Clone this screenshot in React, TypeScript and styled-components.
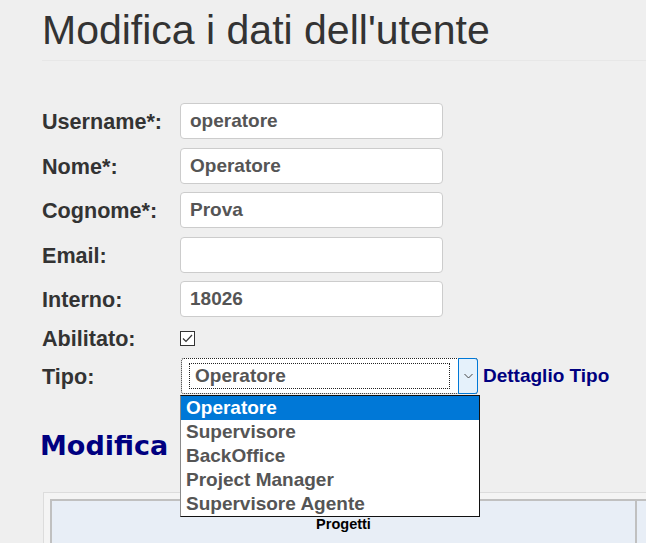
import styled, { createGlobalStyle } from 'styled-components';

const GlobalStyle = createGlobalStyle`
  html, body {
    margin: 0;
    padding: 0;
    background-color: #efefef;
    overflow: hidden;
  }
`;

const Page = styled.div`
  padding-left: 42px;
  font-family: "Liberation Sans", Arial, sans-serif;
  color: #333;
  width: 646px;
  height: 543px;
  box-sizing: border-box;
  overflow: hidden;
`;

const Title = styled.h1`
  margin: 0;
  padding: 8px 0 7px;
  font-size: 41px;
  font-weight: 400;
  line-height: 45px;
  color: #333;
  border-bottom: 1px solid #e7e7e7;
`;

const Form = styled.div`
  margin-top: 42px;
  display: flex;
  flex-direction: column;
  gap: 8.5px;
`;

const Row = styled.div<{ $height?: number }>`
  display: flex;
  align-items: center;
  height: ${(p) => p.$height ?? 36}px;
`;

const Label = styled.label`
  width: 138px;
  flex-shrink: 0;
  font-size: 21.6px;
  font-weight: 700;
  color: #333;
  padding-top: 2px;
`;

const TextInput = styled.div`
  width: 263px;
  height: 36px;
  box-sizing: border-box;
  background: #fff;
  border: 1px solid #ccc;
  border-radius: 4px;
  padding: 0 9px;
  display: flex;
  align-items: center;
  font-size: 19px;
  font-weight: 700;
  color: #555;
`;

const CheckBox = styled.span`
  width: 15px;
  height: 15px;
  box-sizing: border-box;
  border: 1px solid #333;
  background: #fff;
  display: flex;
  align-items: center;
  justify-content: center;
  margin-top: 2px;
`;

const SelectWrap = styled.div`
  position: relative;
  margin-left: 1px;
`;

const SelectBox = styled.div`
  width: 297px;
  height: 36px;
  box-sizing: border-box;
  display: flex;
  background: #fff;
  border: 1px dotted #222;
  border-radius: 3px;
`;

const SelectValue = styled.div`
  flex: 1;
  margin: 4px 8px 4px 7px;
  border: 1px dotted #222;
  display: flex;
  align-items: center;
  padding-left: 5px;
  font-size: 19px;
  font-weight: 700;
  color: #555;
`;

const SelectArrow = styled.div`
  width: 20px;
  box-sizing: border-box;
  background: #e5f1fb;
  border: 1px solid #0078d7;
  border-radius: 0 3px 3px 0;
  margin: -1px -1px -1px 0;
  display: flex;
  align-items: center;
  justify-content: center;
`;

const DropList = styled.ul`
  position: absolute;
  left: -1px;
  top: 37px;
  width: 300px;
  box-sizing: border-box;
  margin: 0;
  padding: 0;
  list-style: none;
  background: #fff;
  border: 1px solid #111;
  border-left-color: #8a8a8a;
  z-index: 10;
`;

const Option = styled.li<{ $selected?: boolean }>`
  height: 24px;
  line-height: 24px;
  padding-left: 5px;
  font-size: 19px;
  font-weight: 700;
  color: ${(p) => (p.$selected ? '#fff' : '#555')};
  background: ${(p) => (p.$selected ? '#0078d7' : 'transparent')};
`;

const DetailLink = styled.a`
  margin-left: 5px;
  font-size: 19px;
  font-weight: 700;
  color: #000080;
  text-decoration: none;
`;

const SectionTitle = styled.h2`
  margin: 36px 0 0 -2px;
  font-family: "DejaVu Sans", Verdana, sans-serif;
  font-size: 27px;
  font-weight: 700;
  color: #000080;
`;

const Panel = styled.div`
  margin: 31px 0 0 1px;
  width: 700px;
  height: 120px;
  box-sizing: border-box;
  background: #f4f4f4;
  border: 1px solid #dcdcdc;
  padding: 6px 0 0 6px;
`;

const Grid = styled.div`
  display: flex;
  height: 100%;
  background: #e8eef6;
  border-top: 2px solid #c0c0c0;
  border-left: 2px solid #c0c0c0;
`;

const HeaderCell = styled.div`
  width: 583px;
  flex-shrink: 0;
  border-right: 2px solid #c0c0c0;
  padding-top: 15px;
  text-align: center;
  font-size: 14.5px;
  font-weight: 700;
  color: #000;
`;

const Cell = styled.div`
  flex: 1;
`;

const tipi = ['Operatore', 'Supervisore', 'BackOffice', 'Project Manager', 'Supervisore Agente'];

const fields = [
  { label: 'Username*:', value: 'operatore' },
  { label: 'Nome*:', value: 'Operatore' },
  { label: 'Cognome*:', value: 'Prova' },
  { label: 'Email:', value: '' },
  { label: 'Interno:', value: '18026' },
];

const App = () => {
  return (
    <>
      <GlobalStyle />
      <Page>
        <Title>Modifica i dati dell'utente</Title>
        <Form>
          {fields.map((f) => (
            <Row key={f.label}>
              <Label>{f.label}</Label>
              <TextInput>{f.value}</TextInput>
            </Row>
          ))}
          <Row $height={24}>
            <Label>Abilitato:</Label>
            <CheckBox>
              <svg width="11" height="9" viewBox="0 0 11 9">
                <polyline points="1,4.5 4,7.5 10,1" fill="none" stroke="#333" strokeWidth="1.2" />
              </svg>
            </CheckBox>
          </Row>
          <Row>
            <Label>Tipo:</Label>
            <SelectWrap>
              <SelectBox>
                <SelectValue>Operatore</SelectValue>
                <SelectArrow>
                  <svg width="9" height="6" viewBox="0 0 9 6">
                    <polyline points="0.5,1 4.5,5 8.5,1" fill="none" stroke="#444" strokeWidth="1" />
                  </svg>
                </SelectArrow>
              </SelectBox>
              <DropList>
                {tipi.map((t, i) => (
                  <Option key={t} $selected={i === 0}>
                    {t}
                  </Option>
                ))}
              </DropList>
            </SelectWrap>
            <DetailLink href="#">Dettaglio Tipo</DetailLink>
          </Row>
        </Form>
        <SectionTitle>Modifica</SectionTitle>
        <Panel>
          <Grid>
            <HeaderCell>Progetti</HeaderCell>
            <Cell />
          </Grid>
        </Panel>
      </Page>
    </>
  );
};

export default App;
